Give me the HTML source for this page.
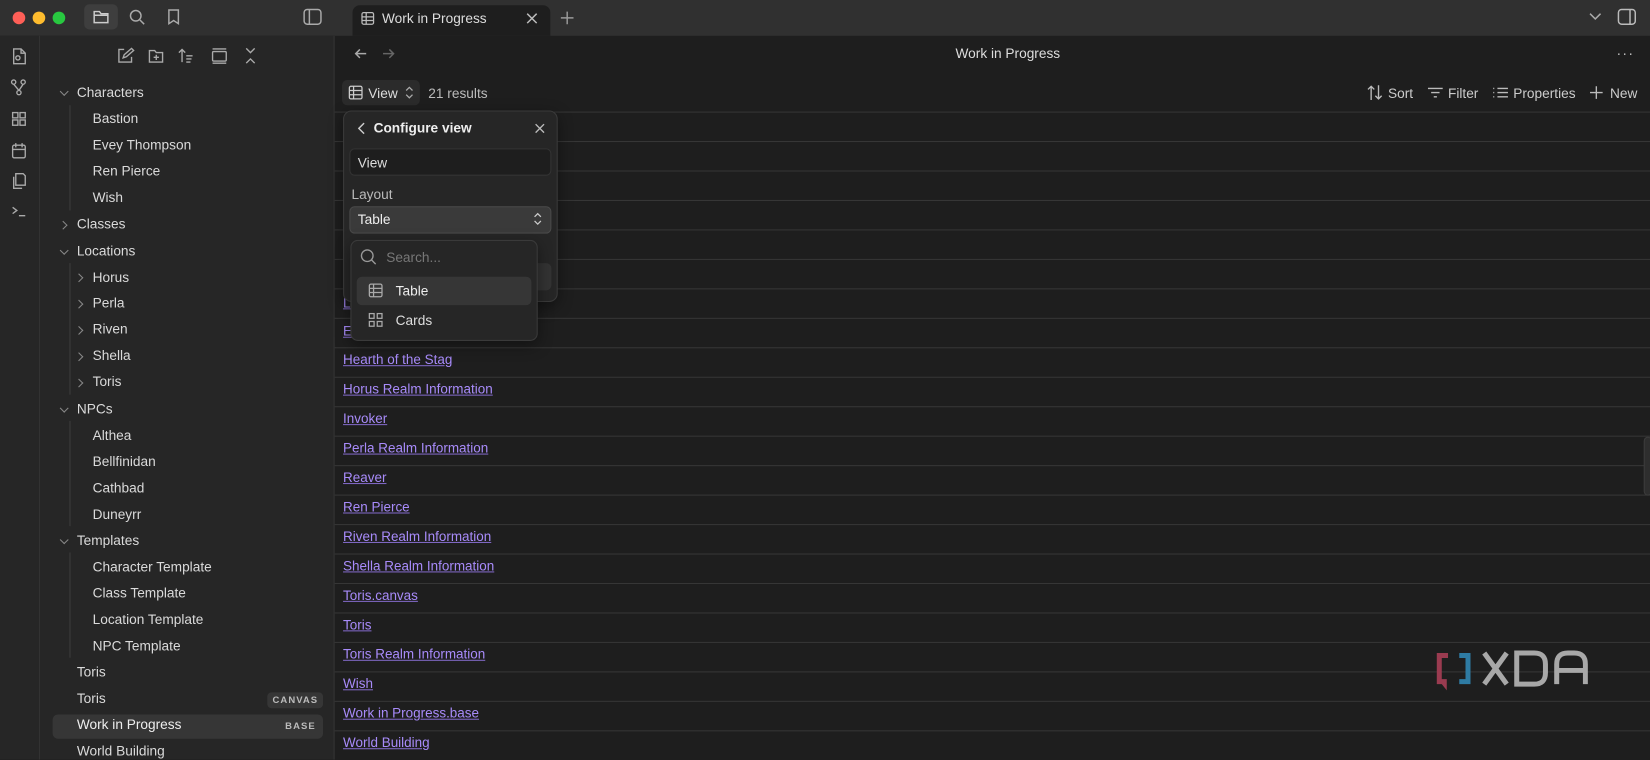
<!DOCTYPE html>
<html><head><meta charset="utf-8"><style>
*{box-sizing:border-box;margin:0;padding:0}
html,body{width:1650px;height:760px;overflow:hidden;background:#1e1e1e}
#w{position:absolute;left:0;top:0;width:1568px;height:722px;transform:scale(1.05230);transform-origin:0 0;font-family:"Liberation Sans",sans-serif;font-size:13px;color:#dadada;background:#1e1e1e;overflow:hidden}
.a{position:absolute}
.title{left:0;top:0;width:1568px;height:34px;background:#303030}
.tab{left:335px;top:5px;width:188px;height:29px;background:#1e1e1e;border-radius:7px 7px 0 0}
.rib{left:0;top:34px;width:38px;height:688px;background:#262626;border-right:1px solid #333}
.side{left:38px;top:34px;width:280px;height:688px;background:#262626;border-right:1px solid #333}
.it{position:absolute;height:20px;line-height:20px;white-space:nowrap}
.chev{position:absolute;width:6px;height:6px;border-right:1.3px solid #888;border-bottom:1.3px solid #888}
.dn{transform:rotate(45deg)}
.rt{transform:rotate(-45deg)}
.vg{position:absolute;width:1px;background:#3d3d3d}
.row{position:absolute;left:318px;width:1250px;height:28px;border-bottom:1px solid #363636}
.lk{position:absolute;left:326px;color:#a88bfa;text-decoration:underline;text-decoration-color:#7f67c4;line-height:20px;font-size:12.8px}
.badge{position:absolute;font-size:9px;font-weight:bold;letter-spacing:1px;color:#bbb;background:#363636;border-radius:4px;padding:2px 5px;line-height:11px}
svg{position:absolute}
</style></head><body><div id="w">
<div class="a title"></div>
<div class="a" style="left:12px;top:11px;width:12px;height:12px;border-radius:6px;background:#fe5f57"></div>
<div class="a" style="left:31px;top:11px;width:12px;height:12px;border-radius:6px;background:#febc2e"></div>
<div class="a" style="left:50px;top:11px;width:12px;height:12px;border-radius:6px;background:#28c840"></div>
<div class="a" style="left:80px;top:4px;width:32px;height:24px;border-radius:5px;background:#3e3e3e"></div>
<svg style="left:88px;top:8px" width="16" height="16" viewBox="0 0 16 16" fill="none" stroke="#ccc" stroke-width="1.4"><path d="M1.5 3h5l1.5 2h6.5v8.5h-13z M1.5 6.5h13"/></svg>
<svg style="left:122px;top:8px" width="16" height="16" viewBox="0 0 16 16" fill="none" stroke="#aaa" stroke-width="1.4"><circle cx="7" cy="7" r="5"/><path d="M11 11l4 4"/></svg>
<svg style="left:158px;top:8px" width="14" height="16" viewBox="0 0 14 16" fill="none" stroke="#aaa" stroke-width="1.4"><path d="M2.5 1.5h9v13l-4.5-3-4.5 3z"/></svg>
<svg style="left:288px;top:8px" width="18" height="16" viewBox="0 0 18 16" fill="none" stroke="#aaa" stroke-width="1.4"><rect x="1" y="1" width="16" height="14" rx="3"/><path d="M6 1v14"/></svg>
<div class="a tab"></div>
<svg style="left:343px;top:11px" width="13" height="13" viewBox="0 0 13 13" fill="none" stroke="#bbb" stroke-width="1.2"><rect x="1" y="1" width="11" height="11" rx="1.5"/><path d="M1 5h11M1 8.5h11M5 1v11"/></svg>
<div class="a" style="left:363px;top:10px;color:#ddd">Work in Progress</div>
<svg style="left:500px;top:12px" width="11" height="11" viewBox="0 0 11 11" stroke="#bbb" stroke-width="1.4"><path d="M1 1l9 9M10 1l-9 9"/></svg>
<svg style="left:532px;top:10px" width="14" height="14" viewBox="0 0 14 14" stroke="#999" stroke-width="1.4"><path d="M7 1v12M1 7h12"/></svg>
<svg style="left:1510px;top:12px" width="12" height="8" viewBox="0 0 12 8" fill="none" stroke="#aaa" stroke-width="1.4"><path d="M1 1l5 5 5-5"/></svg>
<svg style="left:1537px;top:8px" width="18" height="16" viewBox="0 0 18 16" fill="none" stroke="#bbb" stroke-width="1.4"><rect x="1" y="1" width="16" height="14" rx="3"/><path d="M12 1v14"/></svg>

<div class="a rib"></div>
<svg style="left:10px;top:45px" width="16" height="112" viewBox="0 0 16 112" fill="none" stroke="#aaa" stroke-width="1.3">
<path d="M3 1.5h7l4 4v10h-11z M10 1.5v4h4"/><circle cx="7" cy="10" r="2"/>
<circle cx="3" cy="33" r="2"/><circle cx="12" cy="33" r="2"/><circle cx="8" cy="43" r="2"/><path d="M3 35l5 6M12 35l-4 6"/>
<rect x="2" y="62" width="5" height="5"/><rect x="9" y="62" width="5" height="5"/><rect x="2" y="69" width="5" height="5"/><rect x="9" y="69" width="5" height="5"/>
<rect x="2" y="93" width="12" height="12" rx="1.5"/><path d="M2 97h12M5 91v4M11 91v4"/>
</svg>
<svg style="left:10px;top:163px" width="16" height="50" viewBox="0 0 16 50" fill="none" stroke="#aaa" stroke-width="1.3"><path d="M5 2h7l2 2v9h-9z M3 5v11h8"/><path d="M2 34l4 3-4 3M8 42h6"/></svg>

<div class="a side"></div>
<svg style="left:111px;top:45px" width="140" height="16" viewBox="0 0 140 16" fill="none" stroke="#aaa" stroke-width="1.3">
<path d="M7 2H2v12h12V9 M6 10l1-3 7-6 2 2-7 6z"/>
<path d="M31 3h5l1.5 2h6v9h-12.5z M37.5 7v5M35 9.5h5"/>
<path d="M62 14V2M59 5l3-3 3 3M66 8h6M66 11h5M66 14h4"/>
<rect x="91" y="4" width="13" height="9" rx="1"/><path d="M91 1.5h13M91 15h13"/>
<path d="M123 1l4 4 4-4M123 15l4-4 4 4"/>
</svg>
<div class="vg" style="left:66px;top:100px;height:100px"></div>
<div class="vg" style="left:66px;top:250px;height:125px"></div>
<div class="vg" style="left:66px;top:400px;height:100px"></div>
<div class="vg" style="left:66px;top:525px;height:100px"></div>
<div class="a" style="left:50px;top:679px;width:257px;height:23px;background:#363636;border-radius:5px"></div>
<div class="chev dn" style="left:58px;top:84px"></div><div class="it" style="left:73px;top:78px">Characters</div>
<div class="it" style="left:88px;top:103px">Bastion</div>
<div class="it" style="left:88px;top:128px">Evey Thompson</div>
<div class="it" style="left:88px;top:153px">Ren Pierce</div>
<div class="it" style="left:88px;top:178px">Wish</div>
<div class="chev rt" style="left:57px;top:211px"></div><div class="it" style="left:73px;top:203px">Classes</div>
<div class="chev dn" style="left:58px;top:235px"></div><div class="it" style="left:73px;top:229px">Locations</div>
<div class="chev rt" style="left:72px;top:261px"></div><div class="it" style="left:88px;top:254px">Horus</div>
<div class="chev rt" style="left:72px;top:286px"></div><div class="it" style="left:88px;top:278px">Perla</div>
<div class="chev rt" style="left:72px;top:311px"></div><div class="it" style="left:88px;top:303px">Riven</div>
<div class="chev rt" style="left:72px;top:336px"></div><div class="it" style="left:88px;top:328px">Shella</div>
<div class="chev rt" style="left:72px;top:361px"></div><div class="it" style="left:88px;top:353px">Toris</div>
<div class="chev dn" style="left:58px;top:385px"></div><div class="it" style="left:73px;top:379px">NPCs</div>
<div class="it" style="left:88px;top:404px">Althea</div>
<div class="it" style="left:88px;top:429px">Bellfinidan</div>
<div class="it" style="left:88px;top:454px">Cathbad</div>
<div class="it" style="left:88px;top:479px">Duneyrr</div>
<div class="chev dn" style="left:58px;top:510px"></div><div class="it" style="left:73px;top:504px">Templates</div>
<div class="it" style="left:88px;top:529px">Character Template</div>
<div class="it" style="left:88px;top:554px">Class Template</div>
<div class="it" style="left:88px;top:579px">Location Template</div>
<div class="it" style="left:88px;top:604px">NPC Template</div>
<div class="it" style="left:73px;top:629px">Toris</div>
<div class="it" style="left:73px;top:654px">Toris</div><div class="badge" style="left:254px;top:658px">CANVAS</div>
<div class="it" style="left:73px;top:679px;color:#eee">Work in Progress</div><div class="badge" style="left:266px;top:683px">BASE</div>
<div class="it" style="left:73px;top:704px">World Building</div>

<svg style="left:336px;top:44px" width="40" height="14" viewBox="0 0 40 14" fill="none" stroke-width="1.4"><path d="M12 7H2M6 3L2 7l4 4" stroke="#aaa"/><path d="M28 7h10M34 3l4 4-4 4" stroke="#666"/></svg>
<div class="a" style="left:908px;top:43px;color:#ddd">Work in Progress</div>
<div class="a" style="left:1536px;top:42px;color:#bbb;font-size:14px;letter-spacing:1px">···</div>

<div class="a" style="left:325px;top:76px;width:74px;height:24px;background:#2b2b2b;border-radius:5px"></div>
<svg style="left:331px;top:81px" width="14" height="14" viewBox="0 0 14 14" fill="none" stroke="#ccc" stroke-width="1.2"><rect x="1" y="1" width="12" height="12" rx="1.5"/><path d="M1 5h12M1 9h12M5 1v12"/></svg>
<div class="a" style="left:350px;top:81px;color:#ddd">View</div>
<svg style="left:385px;top:82px" width="8" height="12" viewBox="0 0 8 12" fill="none" stroke="#aaa" stroke-width="1.2"><path d="M1 4l3-3 3 3M1 8l3 3 3-3"/></svg>
<div class="a" style="left:407px;top:81px;color:#bbb">21 results</div>
<svg style="left:1299px;top:80px" width="16" height="16" viewBox="0 0 16 16" fill="none" stroke="#bbb" stroke-width="1.3"><path d="M4 15V2M1 5l3-3 3 3M11 1v13M8 11l3 3 3-3"/></svg>
<div class="a" style="left:1319px;top:81px;color:#ccc">Sort</div>
<svg style="left:1356px;top:81px" width="16" height="14" viewBox="0 0 16 14" stroke="#bbb" stroke-width="1.3"><path d="M1 3h14M4 7h8M6.5 11h3"/></svg>
<div class="a" style="left:1376px;top:81px;color:#ccc">Filter</div>
<svg style="left:1418px;top:81px" width="16" height="14" viewBox="0 0 16 14" stroke="#bbb" stroke-width="1.3"><path d="M1 3h1M1 7h1M1 11h1M5 3h10M5 7h10M5 11h10"/></svg>
<div class="a" style="left:1438px;top:81px;color:#ccc">Properties</div>
<svg style="left:1510px;top:81px" width="14" height="14" viewBox="0 0 14 14" stroke="#bbb" stroke-width="1.3"><path d="M7 1v12M1 7h12"/></svg>
<div class="a" style="left:1530px;top:81px;color:#ccc">New</div>

<div class="row" style="top:79px"></div>
<div class="row" style="top:107px"></div><div class="row" style="top:135px"></div><div class="row" style="top:163px"></div><div class="row" style="top:191px"></div><div class="row" style="top:219px"></div><div class="row" style="top:247px"></div><div class="row" style="top:275px"></div><div class="row" style="top:303px"></div><div class="row" style="top:331px"></div><div class="row" style="top:359px"></div><div class="row" style="top:387px"></div><div class="row" style="top:415px"></div><div class="row" style="top:443px"></div><div class="row" style="top:471px"></div><div class="row" style="top:499px"></div><div class="row" style="top:527px"></div><div class="row" style="top:555px"></div><div class="row" style="top:583px"></div><div class="row" style="top:611px"></div><div class="row" style="top:639px"></div><div class="row" style="top:667px"></div><div class="row" style="top:695px"></div>
<div class="lk" style="top:278px">L</div>
<div class="lk" style="top:305px">E</div>
<div class="lk" style="top:332px">Hearth of the Stag</div>
<div class="lk" style="top:360px">Horus Realm Information</div>
<div class="lk" style="top:388px">Invoker</div>
<div class="lk" style="top:416px">Perla Realm Information</div>
<div class="lk" style="top:444px">Reaver</div>
<div class="lk" style="top:472px">Ren Pierce</div>
<div class="lk" style="top:500px">Riven Realm Information</div>
<div class="lk" style="top:528px">Shella Realm Information</div>
<div class="lk" style="top:556px">Toris.canvas</div>
<div class="lk" style="top:584px">Toris</div>
<div class="lk" style="top:612px">Toris Realm Information</div>
<div class="lk" style="top:640px">Wish</div>
<div class="lk" style="top:668px">Work in Progress.base</div>
<div class="lk" style="top:696px">World Building</div>
<div class="a" style="left:1562px;top:415px;width:8px;height:56px;background:#2e2e2e;border:1px solid #3c3c3c;border-radius:4px"></div>

<div class="a" style="left:326px;top:105px;width:204px;height:182px;background:#262626;border:1px solid #3a3a3a;border-radius:8px;box-shadow:0 4px 14px rgba(0,0,0,.4)"></div>
<svg style="left:340px;top:116px" width="8" height="12" viewBox="0 0 8 12" fill="none" stroke="#ccc" stroke-width="1.4"><path d="M6 1L1 6l5 5"/></svg>
<div class="a" style="left:355px;top:114px;color:#eee;font-weight:bold">Configure view</div>
<svg style="left:508px;top:117px" width="10" height="10" viewBox="0 0 10 10" stroke="#bbb" stroke-width="1.3"><path d="M1 1l8 8M9 1l-8 8"/></svg>
<div class="a" style="left:332px;top:141px;width:192px;height:26px;background:#1e1e1e;border:1px solid #333;border-radius:5px"></div>
<div class="a" style="left:340px;top:147px;color:#ddd">View</div>
<div class="a" style="left:334px;top:177px;color:#bbb">Layout</div>
<div class="a" style="left:332px;top:196px;width:192px;height:26px;background:#3a3a3a;border:1px solid #4a4a4a;border-radius:5px"></div>
<div class="a" style="left:340px;top:201px;color:#eee">Table</div>
<svg style="left:507px;top:202px" width="8" height="12" viewBox="0 0 8 12" fill="none" stroke="#ccc" stroke-width="1.2"><path d="M1 4l3-3 3 3M1 8l3 3 3-3"/></svg>
<div class="a" style="left:480px;top:250px;width:44px;height:26px;background:#333;border-radius:5px"></div>
<div class="a" style="left:333px;top:228px;width:178px;height:96px;background:#262626;border:1px solid #3a3a3a;border-radius:7px;box-shadow:0 4px 14px rgba(0,0,0,.4)"></div>
<svg style="left:342px;top:236px" width="16" height="16" viewBox="0 0 16 16" fill="none" stroke="#999" stroke-width="1.3"><circle cx="7" cy="7" r="5.5"/><path d="M11 11l4 4"/></svg>
<div class="a" style="left:367px;top:237px;color:#777">Search...</div>
<div class="a" style="left:339px;top:263px;width:166px;height:27px;background:#363636;border-radius:5px"></div>
<svg style="left:350px;top:269px" width="14" height="14" viewBox="0 0 14 14" fill="none" stroke="#aaa" stroke-width="1.2"><rect x="1" y="1" width="12" height="12" rx="1.5"/><path d="M1 5h12M1 9h12M5 1v12"/></svg>
<div class="a" style="left:376px;top:269px;color:#eee">Table</div>
<svg style="left:350px;top:297px" width="14" height="14" viewBox="0 0 14 14" fill="none" stroke="#aaa" stroke-width="1.2"><rect x="1" y="1" width="4.5" height="4.5"/><rect x="8.5" y="1" width="4.5" height="4.5"/><rect x="1" y="8.5" width="4.5" height="4.5"/><rect x="8.5" y="8.5" width="4.5" height="4.5"/></svg>
<div class="a" style="left:376px;top:297px;color:#ddd">Cards</div>

<svg style="left:1363px;top:617px" width="146" height="42" viewBox="0 0 123 35.5" preserveAspectRatio="none">
<path d="M2 3h9v4H6v17h4l0 9-4-5H2z" fill="#9a3b50"/>
<path d="M20 3h9v25h-9v-4h5V7h-5z" fill="#2e7ba3"/>
<g fill="none" stroke="#a8a8a8" stroke-width="4"><path d="M40 3l18 25M58 3L40 28"/><path d="M66 3h14q9 0 9 9v7q0 9-9 9H66z"/><path d="M98 28V12q0-9 9-9h5q9 0 9 9v16M98 17h23"/></g>
</svg>
</div></body></html>
